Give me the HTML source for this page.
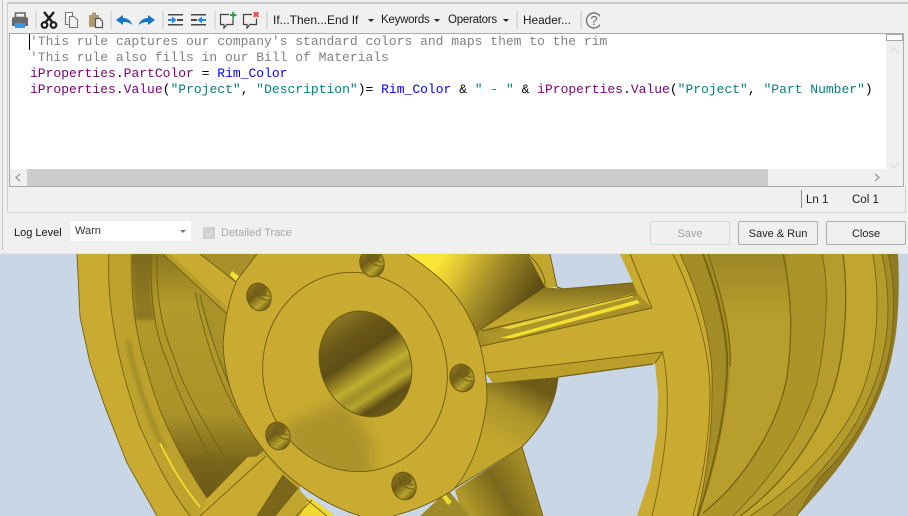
<!DOCTYPE html>
<html><head><meta charset="utf-8"><style>
html,body{margin:0;padding:0;width:908px;height:516px;overflow:hidden;background:#c9d6e6}
div,span{position:absolute}
.t{font:11px/16px "Liberation Sans",sans-serif;color:#1a1a1a;white-space:nowrap}
.k{font-size:11.500px;letter-spacing:-.25px}
.c{font:13px/16px "Liberation Mono",monospace;white-space:pre;left:30px;color:#000}
.c span{position:static}
.g{color:#808080}.p{color:#800080}.b{color:#0000ff}.s{color:#008080}
.sep{width:2px;height:18px;top:11px;background:#dcdcdc}
.btn{height:22px;width:78px;top:221px;border:1px solid #adadad;border-radius:2px;background:#f0f0f0;text-align:center;font:11px/24px "Liberation Sans",sans-serif;color:#222}
.ar{width:0;height:0;border-left:3px solid transparent;border-right:3px solid transparent;border-top:3px solid #222;top:19px}
</style></head><body>
<svg width="908" height="516" viewBox="0 0 908 516" style="position:absolute;left:0;top:0">
<defs>
<filter id="bl" x="-40%" y="-40%" width="180%" height="180%"><feGaussianBlur stdDeviation="8"/></filter>
<filter id="bl2" x="-30%" y="-30%" width="160%" height="160%"><feGaussianBlur stdDeviation="1.5"/></filter>
<linearGradient id="bandL" x1="0" y1="0" x2="0" y2="1"><stop offset="0" stop-color="#8d7720"/><stop offset=".2" stop-color="#b39a2b"/><stop offset=".65" stop-color="#ab932a"/><stop offset=".85" stop-color="#7a661b"/><stop offset="1" stop-color="#6a5818"/></linearGradient>
<linearGradient id="bore" x1=".42" y1="0" x2=".58" y2="1"><stop offset="0" stop-color="#8a7622"/><stop offset=".22" stop-color="#6a5818"/><stop offset=".4" stop-color="#5f4f14"/><stop offset=".5" stop-color="#8d7a22"/><stop offset=".62" stop-color="#c0ae2e"/><stop offset=".7" stop-color="#a09026"/><stop offset=".78" stop-color="#b7a52c"/><stop offset=".88" stop-color="#5f4f14"/><stop offset="1" stop-color="#6d5b18"/></linearGradient>
<linearGradient id="cone" gradientUnits="userSpaceOnUse" x1="445" y1="250" x2="530" y2="300"><stop offset="0" stop-color="#fbe536"/><stop offset=".2" stop-color="#e0c633"/><stop offset=".55" stop-color="#a48c28"/><stop offset="1" stop-color="#5d4d14"/></linearGradient>
<linearGradient id="coneB" gradientUnits="userSpaceOnUse" x1="530" y1="385" x2="500" y2="445"><stop offset="0" stop-color="#6d5b18"/><stop offset=".45" stop-color="#ad952a"/><stop offset="1" stop-color="#c2a72e"/></linearGradient>
<linearGradient id="coneC" gradientUnits="userSpaceOnUse" x1="470" y1="510" x2="540" y2="470"><stop offset="0" stop-color="#b09829"/><stop offset=".45" stop-color="#7c681c"/><stop offset="1" stop-color="#b09829"/></linearGradient>
<linearGradient id="sp1" gradientUnits="userSpaceOnUse" x1="0" y1="290" x2="0" y2="335"><stop offset="0" stop-color="#8a7520"/><stop offset=".5" stop-color="#bba22c"/><stop offset="1" stop-color="#c6aa30"/></linearGradient>
<linearGradient id="hole" x1=".2" y1="0" x2=".6" y2="1"><stop offset="0" stop-color="#8b7622"/><stop offset=".4" stop-color="#6f5d18"/><stop offset=".75" stop-color="#b9a32c"/><stop offset="1" stop-color="#6f5d18"/></linearGradient>
<linearGradient id="topd" x1="0" y1="0" x2="0" y2="1"><stop offset="0" stop-color="#9c8625"/><stop offset="1" stop-color="#9c8625" stop-opacity="0"/></linearGradient>
<clipPath id="ci"><ellipse cx="355" cy="372" rx="92" ry="100" transform="rotate(-12 355 372)"/></clipPath>
<g id="h"><ellipse rx="12" ry="14" fill="url(#hole)" stroke="#6e5a10" transform="rotate(-18)"/><path d="M-3 -12 C1 -6 5 0 11 -1 M-5 -9 C-3 -2 2 4 11 3" fill="none" stroke="#6e5a10" stroke-width=".9"/><ellipse cx="4" cy="-5" rx="5" ry="5" fill="#74611a" stroke="none" transform="rotate(-18)"/></g>
</defs>
<rect width="908" height="516" fill="#c9d6e6"/>

<!-- LEFT RIM -->
<path d="M77 254 L80 317 L90 363 L105 407 L127 463 L157 516 L300 516 L300 254Z" fill="#c8ab30"/>
<path d="M109 254 C106 310 120 370 140 427 C155 460 170 490 190 516 L300 516 L300 254Z" fill="#bda22d"/>
<path d="M128 340 C135 380 150 420 165 450" fill="none" stroke="#a68e28" stroke-width="5" filter="url(#bl2)"/>
<path d="M160 443 C172 468 186 490 200 507" fill="none" stroke="#efd935" stroke-width="2"/>
<path d="M132 254 C130 310 140 350 147 370 C160 420 185 465 207 498 L300 420 L300 254Z" fill="url(#bandL)"/>
<path d="M132 254 L151 254 C150 280 152 300 155 320 L135 320Z" fill="#6f5d1a" opacity=".55" filter="url(#bl2)"/>
<path d="M195 292 L240 417 L226 320 L226 300Z" fill="#a5902a"/>
<path d="M203 298 L240 405 L228 360 L226 315Z" fill="#ab932a"/>
<path d="M163 254 L200 254 L237 283 L226 313Z" fill="#c8ab30"/>
<path d="M200 254 L257 254 L237 283Z" fill="#a98f2a"/>
<path d="M232 271 L240 277 L236 281 L230 275Z" fill="#f1de3a"/>
<path d="M170 254 L226 306 L226 313 L163 254Z" fill="#b69d2c"/>
<path d="M200 516 L207 498 L247 457 L266 456 L283 475 L257 516Z" fill="#c8ab30"/>
<path d="M283 475 L257 516 L275 516 L298 488Z" fill="#7a661b"/>
<path d="M298 488 L275 516 L327 516 L307 498Z" fill="#c0a62e"/>
<path d="M310 497 L335 516 L300 516Z" fill="#f0d932"/>
<g fill="none" stroke="#75610f" stroke-width=".9">
<path d="M77 254 L80 317 L90 363 L105 407 L127 463 L157 516"/>
<path d="M109 254 C106 310 120 370 140 427 C155 460 170 490 190 516"/>
<path d="M132 254 C130 310 140 350 147 370 C160 420 185 465 207 498"/>
<path d="M151 254 C150 300 155 335 168 363 C180 400 205 450 223 480"/>
<path d="M157 254 C156 300 162 330 175 360 C185 395 215 440 232 470"/>
<path d="M163 254 L226 313 M200 254 L237 283"/>
<path d="M195 292 C205 340 220 385 240 417 M200 295 C210 340 228 385 243 415"/>
<path d="M200 516 L266 456 M207 498 L247 457 M257 516 L283 475 M275 516 L298 488 M307 500 L327 516 M296 516 L312 500"/>
</g>

<!-- RIGHT RIM -->
<path d="M600 254 H898 C900 290 898 330 893 350 C885 395 860 445 820 490 L797 516 H600Z" fill="#8f7922"/>
<path d="M600 254 H888 C897 290 895 340 883 377 C870 415 850 450 820 477 L797 516 H600Z" fill="#a48d28"/>
<path d="M600 254 H882 C892 300 888 340 880 367 C865 420 830 470 773 516 H600Z" fill="#b39b2c"/>
<path d="M600 254 H873 C880 300 878 340 867 377 C855 420 820 470 750 516 H600Z" fill="#c0a52e"/>
<path d="M600 254 H843 C848 290 846 340 837 377 C825 425 790 480 740 516 H600Z" fill="#b59c2c"/>
<path d="M600 254 H822 C830 290 826 340 817 383 C805 425 780 470 733 516 H600Z" fill="#ac9429"/>
<path d="M600 254 H783 C793 300 792 340 787 377 C778 425 745 480 703 513 L700 516 H600Z" fill="#b89f2d"/>
<path d="M704 254 H786 L792 320 H722Z" fill="url(#topd)"/>
<path d="M600 254 H708 C724 300 732 340 730 367 C728 420 712 480 698 516 H600Z" fill="#a48c27"/>
<path d="M600 254 H680 C702 300 714 350 712 393 C712 430 708 470 697 516 H600Z" fill="#c8ab30"/>
<g fill="none" stroke="#7a6410" stroke-width=".9">
<path d="M888 254 C897 290 895 340 883 377 C870 415 850 450 820 477 L797 516"/>
<path d="M882 254 C892 300 888 340 880 367 C865 420 830 470 773 516"/>
<path d="M873 254 C880 300 878 340 867 377 C855 420 820 470 750 516"/>
<path d="M843 254 C848 290 846 340 837 377 C825 425 790 480 740 516" stroke-width="1.300"/>
<path d="M822 254 C830 290 826 340 817 383 C805 425 780 470 733 516"/>
<path d="M783 254 C793 300 792 340 787 377 C778 425 745 480 703 513" stroke-width="1.300"/>
<path d="M703 254 C720 300 728 340 727 367 C726 420 710 480 698 516" stroke-width="2"/>
<path d="M708 254 C724 300 732 340 730 367" stroke-width="1.200"/>
<path d="M673 254 C695 300 710 350 710 393 C710 430 705 470 693 516"/>
<path d="M680 254 C702 300 714 350 712 393 C712 430 708 470 697 516"/>
<path d="M663 353 C670 390 670 440 652 516"/>
</g>

<!-- BLUE CUTOUTS -->
<path d="M540 250 L550 254 L557 285 L563 289 L633 283 L620 254 L615 250Z" fill="#c9d6e6"/>
<path d="M558 377 L655 363 L658 393 L657 433 L650 477 L637 516 L543 516 L522 447 L540 430 L555 400Z" fill="#c9d6e6"/>

<!-- CONES & SPOKES -->
<path d="M528 254 L550 254 L557 287 L545 287Z" fill="#c2a72e"/>
<path d="M407 254 L528 254 L545 287 L480 330 L470 360 L430 300Z" fill="url(#cone)"/>
<path d="M487 383 L558 377 C556 400 548 420 522 447 L452 490 L470 440Z" fill="url(#coneB)"/>
<path d="M522 447 L543 516 L463 516 L455 490Z" fill="url(#coneC)"/>
<path d="M448 490 L470 516 L420 516Z" fill="#a08a27"/>
<path d="M445 494 L452 502 L448 505 L442 497Z" fill="#efd935"/>
<path d="M480 330 L545 287 L563 289 L633 283 L637 293 L482 331Z" fill="url(#sp1)"/>
<path d="M480 330 L638 294 L652 308 L478 347 Q476 338 480 330Z" fill="#a68f29"/>
<path d="M484 335 L636 297 L646 304 L490 344Z" fill="#ad952a"/>
<path d="M500 338 L637 300 L640 303 L512 338Z" fill="#f3df2f"/>
<path d="M500 328 L632 295 L633 297 L510 329Z" fill="#e6d23a"/>
<path d="M478 347 L652 308 L668 353 L485 373Z" fill="#c8ab30"/>
<path d="M485 373 L663 352 L655 364 L558 377 L493 383Z" fill="#ba9f2b"/>
<g fill="none" stroke="#6e5a10" stroke-width=".9">
<path d="M545 287 L480 330 M482 331 L638 294 M478 347 L652 308 M485 373 L663 352 L655 363"/>
<path d="M528 254 C540 265 546 278 545 287 M550 254 L557 287 M522 447 L452 490 M522 447 L543 516 M558 377 C556 400 548 420 522 447"/>
<path d="M630 254 L652 308"/>
</g>
<path d="M557 287 L563 289 L633 283 M558 377 L653 364" fill="none" stroke="#7a6410" stroke-width="1.300"/>

<!-- HUB -->
<path d="M257 254 L237 280 Q226 305 223 343 Q224 380 240 413 Q262 455 293 480 Q325 505 360 516 L393 516 Q425 508 453 490 Q480 460 487 400 Q487 365 477 335 Q462 295 433 273 Q420 262 407 254Z" fill="#c8ab30"/>
<path d="M237 280 Q226 305 223 343 Q224 380 240 413 Q262 455 293 480 Q325 505 360 516 M393 516 Q425 508 453 490 Q480 460 487 400 Q487 365 477 335 Q462 295 433 273 Q420 262 407 254 M257 254 L237 280" fill="none" stroke="#6e5a10" stroke-width=".9"/>
<ellipse cx="355" cy="372" rx="92" ry="100" fill="#c8ab30" transform="rotate(-12 355 372)"/>
<g clip-path="url(#ci)"><path d="M345 400 L372 440 L372 490 L325 480 L285 450 L285 425Z" fill="#ab9329" filter="url(#bl)"/></g>
<ellipse cx="355" cy="372" rx="92" ry="100" fill="none" stroke="#6e5a10" stroke-width=".9" transform="rotate(-12 355 372)"/>
<ellipse cx="365.500" cy="364" rx="45" ry="54" fill="url(#bore)" stroke="#6e5a10" transform="rotate(-22 365.500 364)"/>
<use href="#h" x="259" y="297"/><use href="#h" x="372" y="263"/><use href="#h" x="462" y="378"/><use href="#h" x="278" y="436"/><use href="#h" x="404" y="486"/>
</svg>

<!-- dialog -->
<div style="left:0;top:0;width:908px;height:254px;background:#f0f0f0;border-bottom:1px solid #e6e6e6;box-sizing:border-box"></div>
<div style="left:2px;top:0;width:1px;height:250px;background:#c4c4c4"></div>
<div style="left:7px;top:2px;width:901px;height:2px;background:#c9c9c9"></div>
<div style="left:7px;top:2px;width:1px;height:210px;background:#d0d0d0"></div>
<div style="left:7px;top:212px;width:898px;height:1px;background:#d4d4d4"></div>
<div style="left:905px;top:186px;width:1px;height:27px;background:#d4d4d4"></div>

<svg width="600" height="34" style="position:absolute;left:0;top:0">
<!-- printer -->
<path d="M15.500 13h9.500v4.500h-9.500z" fill="none" stroke="#666" stroke-width="1.600"/>
<path d="M14 17h12q2 0 2 2v7h-3v-3H15v3h-3v-7q0-2 2-2z" fill="#6a6a6a"/>
<rect x="15" y="23" width="10" height="5" fill="#3f97e0"/>
<!-- scissors -->
<g stroke="#1d1d1d" fill="none"><path d="M44 12 L53 23 M54 12 L45 23" stroke-width="2.400"/><circle cx="44.500" cy="25" r="2.800" stroke-width="2.200"/><circle cx="53.500" cy="25" r="2.800" stroke-width="2.200"/></g>
<!-- copy -->
<g fill="#f4f4f4" stroke="#777" stroke-width="1.100"><path d="M65.500 12.500h7v12h-7z"/><path d="M69.500 16.500h4.500l3.500 3.500v7.500h-8z"/></g>
<!-- paste -->
<path d="M89 15h3v-2.500h4v2.500h3v12h-10z" fill="#b09a72"/>
<path d="M95.500 18.500h4.500l2.500 3v6h-7z" fill="#f4f4f4" stroke="#555" stroke-width="1.200"/>
<!-- undo / redo -->
<path d="M116 20 L123 15 V18 Q130 18 132.500 25 Q128 21.500 123 22 V25Z" fill="#1677c9"/>
<path d="M155 20 L148 15 V18 Q141 18 138.500 25 Q143 21.500 148 22 V25Z" fill="#1677c9"/>
<!-- indent -->
<g fill="#4a4a4a"><rect x="168" y="14" width="15" height="1.500"/><rect x="168" y="24" width="15" height="1.500"/><rect x="177" y="19" width="6" height="2"/></g>
<path d="M168 19h4v-2.500l4.500 3.500-4.500 3.500V21h-4z" fill="#1e88e5"/>
<g fill="#4a4a4a"><rect x="191" y="14" width="15" height="1.500"/><rect x="191" y="24" width="15" height="1.500"/><rect x="191" y="19" width="6" height="2"/></g>
<path d="M206 19h-4v-2.500l-4.500 3.500 4.500 3.500V21h4z" fill="#1e88e5"/>
<!-- comments -->
<path d="M233 18.500V24.500H227L224 28V24.500H220.500V14.500H229" fill="none" stroke="#444" stroke-width="1.200"/>
<path d="M230 14h2.200v-2.200h2v2.200h2.200v2h-2.200v2.200h-2v-2.200H230z" fill="#2ca24a"/>
<path d="M256.500 18.500V24.500H250L247 28V24.500H243.500V14.500H252" fill="none" stroke="#444" stroke-width="1.200"/>
<path d="M253.800 12.300l4.600 4.600M258.400 12.300l-4.600 4.600" stroke="#ef4c4c" stroke-width="2.200"/>
<!-- help -->
<circle cx="594" cy="20.500" r="7.500" fill="none" stroke="#777" stroke-width="1.400"/>
<text x="594" y="25" text-anchor="middle" font-family="Liberation Sans,sans-serif" font-size="13" fill="#666">?</text>
</svg>
<div class="sep" style="left:35px"></div><div class="sep" style="left:110px"></div><div class="sep" style="left:162px"></div><div class="sep" style="left:214px"></div><div class="sep" style="left:266px"></div><div class="sep" style="left:516px"></div><div class="sep" style="left:580px"></div>
<div class="t" style="left:273px;top:12px;font-size:12px">If...Then...End If</div><div class="ar" style="left:368px"></div>
<div class="t k" style="left:381px;top:12px">Keywords</div><div class="ar" style="left:434px"></div>
<div class="t k" style="left:448px;top:12px">Operators</div><div class="ar" style="left:503px"></div>
<div class="t" style="left:523px;top:12px;font-size:11.800px">Header...</div>

<!-- editor -->
<div style="left:9px;top:33px;width:895px;height:154px;background:#fff;border:1px solid #ababab;box-sizing:border-box"></div>
<div style="left:29px;top:34px;width:1px;height:16px;background:#000"></div>
<div class="c g" style="top:34px">'This rule captures our company's standard colors and maps them to the rim</div>
<div class="c g" style="top:50px">'This rule also fills in our Bill of Materials</div>
<div class="c" style="top:66px"><span class="p">iProperties</span>.<span class="p">PartColor</span> = <span class="b">Rim_Color</span></div>
<div class="c" style="top:82px"><span class="p">iProperties</span>.<span class="p">Value</span>(<span class="s">"Project"</span>, <span class="s">"Description"</span>)= <span class="b">Rim_Color</span> &amp; <span class="s">" - "</span> &amp; <span class="p">iProperties</span>.<span class="p">Value</span>(<span class="s">"Project"</span>, <span class="s">"Part Number"</span>)</div>

<!-- scrollbars -->
<div style="left:886px;top:34px;width:17px;height:152px;background:#f0f0f0"></div>
<div style="left:886px;top:34px;width:17px;height:7px;background:#fff;border:1px solid #a8a8a8;box-sizing:border-box"></div>
<div style="left:10px;top:169px;width:893px;height:17px;background:#f0f0f0"></div>
<div style="left:27px;top:169px;width:741px;height:17px;background:#cdcdcd"></div>
<svg width="908" height="200" style="position:absolute;left:0;top:0">
<path d="M890 52l4-4 4 4" fill="none" stroke="#dcdcdc" stroke-width="1.300"/>
<path d="M890 164l4 4 4-4" fill="none" stroke="#dcdcdc" stroke-width="1.300"/>
<path d="M20 174l-4 3.500 4 3.500" fill="none" stroke="#9a9a9a" stroke-width="1.300"/>
<path d="M875 174l4 3.500-4 3.500" fill="none" stroke="#9a9a9a" stroke-width="1.300"/>
</svg>

<!-- status -->
<div style="left:801px;top:190px;width:1px;height:18px;background:#8c8c8c"></div>
<div class="t" style="left:806px;top:192px;font-size:11.500px">Ln 1</div>
<div class="t" style="left:852px;top:192px;font-size:11.500px">Col 1</div>

<!-- footer -->
<div class="t" style="left:14px;top:225px">Log Level</div>
<div style="left:71px;top:221px;width:120px;height:20px;background:#fff"></div>
<div class="t" style="left:75px;top:223px;color:#333">Warn</div>
<div style="left:180px;top:230px;width:0;height:0;border-left:3px solid transparent;border-right:3px solid transparent;border-top:3px solid #777"></div>
<div style="left:203px;top:227px;width:12px;height:12px;background:#d0d0d0"></div>
<svg width="12" height="12" style="position:absolute;left:203px;top:227px"><path d="M2.500 6l2.500 2.500 4.500-5" fill="none" stroke="#e0e0e0" stroke-width="1.300"/></svg>
<div class="t" style="left:221px;top:225px;color:#a8a8a8">Detailed Trace</div>
<div class="btn" style="left:650px;border-color:#d8d8d8;color:#a0a0a0">Save</div>
<div class="btn" style="left:738px">Save &amp; Run</div>
<div class="btn" style="left:826px">Close</div>
</body></html>
